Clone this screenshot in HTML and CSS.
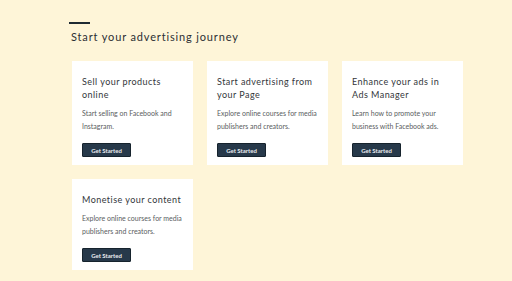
FILE: index.html
```html
<!DOCTYPE html>
<html lang="en">
<head>
    <meta charset="UTF-8">
    <meta name="viewport" content="width=device-width, initial-scale=1.0">
    <title>Start your advertising journey</title>
    <link rel="stylesheet" href="styles.css">
</head>
<body>
    <div class="page">
        <section class="journey">
            <span class="rule"></span>
            <h2>Start your advertising journey</h2>
            <div class="cards">
                <div class="card">
                    <h3>Sell your products online</h3>
                    <p>Start selling on Facebook and Instagram.</p>
                    <button>Get Started</button>
                </div>
                <div class="card">
                    <h3>Start advertising from your Page</h3>
                    <p>Explore online courses for media publishers and creators.</p>
                    <button>Get Started</button>
                </div>
                <div class="card">
                    <h3>Enhance your ads in Ads Manager</h3>
                    <p>Learn how to promote your business with Facebook ads.</p>
                    <button>Get Started</button>
                </div>
                <div class="card">
                    <h3>Monetise your content</h3>
                    <p>Explore online courses for media publishers and creators.</p>
                    <button>Get Started</button>
                </div>
            </div>
        </section>
    </div>
</body>
</html>
```

FILE: styles.css
```css
* {
    margin: 0;
    padding: 0;
    box-sizing: border-box;
    font-family: "Lato", "Open Sans", Arial, sans-serif;
}

body {
    background-color: #fef5d8;
    min-height: 100vh;
    overflow: hidden;
}

.page {
    padding: 22px 0 0 72px;
}

.rule {
    display: block;
    width: 21px;
    height: 2px;
    margin-left: -3px;
    background: #1f2b33;
}

.journey h2 {
    margin-top: 6px;
    font-size: 11px;
    line-height: 14px;
    font-weight: 400;
    letter-spacing: 0.85px;
    color: #2c2f33;
    margin-left: -1px;
}

.cards {
    display: grid;
    grid-template-columns: repeat(3, 121px);
    gap: 14px;
    margin-top: 17px;
}

.card {
    background: #ffffff;
    padding: 14px 10px 8px;
    display: flex;
    flex-direction: column;
    align-items: flex-start;
}

.card h3 {
    font-size: 9px;
    line-height: 13px;
    font-weight: 400;
    letter-spacing: 0.45px;
    color: #33363a;
}

.card p {
    margin-top: 6px;
    font-size: 7px;
    line-height: 12.5px;
    color: #5a5d61;
}

.card button {
    margin-top: 11px;
    height: 14px;
    width: 49px;
    background: #27394a;
    border: 1px solid #16232d;
    border-radius: 1px;
    color: #e9ecef;
    font-size: 6px;
    font-weight: 700;
    cursor: pointer;
}

.card button:hover {
    background: #1d2d3a;
}
```
